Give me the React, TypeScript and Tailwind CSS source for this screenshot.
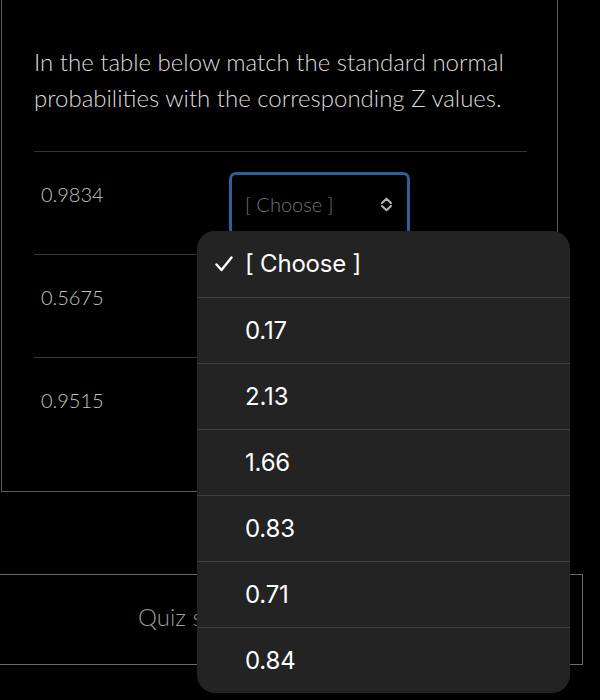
import React from 'react';

const options = ['[ Choose ]', '0.17', '2.13', '1.66', '0.83', '0.71', '0.84'];
const probabilities = ['0.9834', '0.5675', '0.9515'];

function UpDownChevron() {
    return (
        <svg width="13" height="15" viewBox="0 0 13 15" fill="none" stroke="#b5b5b5" strokeWidth="2" strokeLinecap="round" strokeLinejoin="round">
            <polyline points="2,6 6.5,1.8 11,6" />
            <polyline points="2,9 6.5,13.2 11,9" />
        </svg>
    );
}

function Check() {
    return (
        <svg width="18" height="16" viewBox="0 0 18 16" fill="none" stroke="#ffffff" strokeWidth="2.4" strokeLinecap="round" strokeLinejoin="round">
            <polyline points="1.5,8.5 6.5,14 16.5,1.5" />
        </svg>
    );
}

function ChooseSelect({ focused }: { focused?: boolean }) {
    return (
        <div
            className={`w-[181px] h-[64px] rounded-[7px] border-[3px] bg-black flex items-center justify-between pl-[13px] pr-[14px] ${
                focused ? 'border-[#2c5f9c]' : 'border-[#555]'
            }`}
        >
            <span className="text-[20px] font-light text-[#737373]">[ Choose ]</span>
            <UpDownChevron />
        </div>
    );
}

export default function App() {
    return (
        <div className="relative w-[600px] h-[700px] overflow-hidden bg-black" style={{ fontFamily: 'Lato, "Open Sans", sans-serif' }}>
            {/* question card */}
            <div className="ml-[1px] w-[557px] border-x border-b border-[#5a5a5a] pl-[32px] pr-[30px] pt-[44px] pb-[31px]">
                <p className="text-[24px] leading-[36px] font-light text-[#dcdcdc]">
                    In the table below match the standard normal probabilities with the corresponding Z values.
                </p>
                <div className="mt-[35px] border-t border-[#343434]">
                    {probabilities.map((p, i) => (
                        <div
                            key={p}
                            className={`flex items-start pt-[20px] pb-[18px] ${i < probabilities.length - 1 ? 'border-b border-[#343434]' : ''}`}
                        >
                            <div className="w-[195px] pl-[7px] pt-[8px] text-[20px] leading-[28px] font-light text-[#c4c4c4]">{p}</div>
                            <ChooseSelect focused={i === 0} />
                        </div>
                    ))}
                </div>
            </div>

            {/* footer bar */}
            <div className="mt-[82px] w-[583px] h-[91px] border-y border-r border-[#6a6a6a] flex items-center pl-[138px] pb-[6px]">
                <span className="text-[24px] font-light text-[#9a9a9a]">Quiz saved at 10:42pm</span>
            </div>

            {/* native picker menu */}
            <div
                className="absolute left-[197px] top-[231px] w-[373px] rounded-[18px] bg-[#232323] overflow-hidden"
                style={{ fontFamily: 'Inter, Roboto, sans-serif' }}
            >
                {options.map((o, i) => (
                    <div
                        key={o}
                        className={`h-[66px] flex items-center ${i > 0 ? 'border-t border-[#3e3e3e]' : ''}`}
                    >
                        <div className="w-[48px] flex justify-end pr-[12px]">{i === 0 && <Check />}</div>
                        <span className="text-[24px] text-white tracking-[-0.2px]">{o}</span>
                    </div>
                ))}
            </div>
        </div>
    );
}
